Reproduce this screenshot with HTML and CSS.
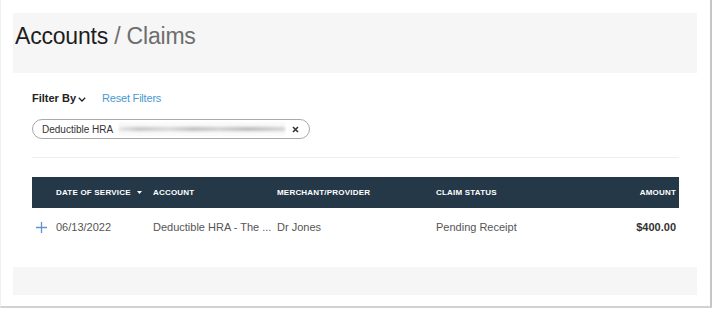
FILE: index.html
```html
<!DOCTYPE html>
<html lang="en">
<head>
    <meta charset="UTF-8">
    <meta name="viewport" content="width=device-width, initial-scale=1.0">
    <title>Accounts / Claims</title>
    <link rel="stylesheet" href="styles.css">
</head>
<body>

<div class="frame">
    <div class="title-band">
        <h1 class="page-title">Accounts <span class="crumb">/ Claims</span></h1>
    </div>

    <div class="content">
        <div class="filter-bar">
            <span class="filter-by">Filter By
                <svg class="chevron" width="8" height="5" viewBox="0 0 8 5"><path d="M0.8 0.8 L4 4 L7.2 0.8" fill="none" stroke="#222" stroke-width="1.3"/></svg>
            </span>
            <a class="reset-link" href="#">Reset Filters</a>
        </div>

        <div class="chip">
            <span class="chip-label">Deductible HRA</span>
            <span class="chip-blur"><span class="blur-line"></span></span>
            <svg class="chip-close" width="7" height="7" viewBox="0 0 7 7"><path d="M1 1 L6 6 M6 1 L1 6" stroke="#333" stroke-width="1.6"/></svg>
        </div>

        <div class="divider"></div>

        <div class="claims-table">
            <div class="table-head">
                <div class="cell cell-date">Date of Service
                    <svg class="sort" width="5" height="3" viewBox="0 0 5 3"><path d="M0 0 H5 L2.5 3 Z" fill="#fff"/></svg>
                </div>
                <div class="cell">Account</div>
                <div class="cell">Merchant/Provider</div>
                <div class="cell">Claim Status</div>
                <div class="cell cell-amount">Amount</div>
            </div>
            <div class="table-row">
                <div class="cell cell-date">
                    <svg class="expand" width="11" height="11" viewBox="0 0 11 11"><path d="M5.5 0 V11 M0 5.5 H11" stroke="#5f95d3" stroke-width="1.3"/></svg>
                    06/13/2022
                </div>
                <div class="cell">Deductible HRA - The ...</div>
                <div class="cell">Dr Jones</div>
                <div class="cell">Pending Receipt</div>
                <div class="cell cell-amount amount">$400.00</div>
            </div>
        </div>
    </div>

    <div class="bottom-band"></div>
</div>

</body>
</html>
```

FILE: styles.css
```css
body {
    margin: 0;
    font-family: 'Liberation Sans', Arial, sans-serif;
    background-color: #ffffff;
}
.frame {
    width: 712px;
    height: 308px;
    box-sizing: border-box;
    padding: 13px 13px 0 12px;
    border-left: 1px solid #f0f0f0;
    border-right: 2px solid #c6c6c6;
    border-bottom: 2px solid #d2d2d2;
    overflow: hidden;
}
.title-band {
    height: 60px;
    box-sizing: border-box;
    padding: 10px 0 0 2px;
    background-color: #f6f6f6;
}
.page-title {
    margin: 0;
    font-size: 23px;
    font-weight: normal;
    line-height: 1.2;
    color: #1e1e1e;
    letter-spacing: -0.2px;
}
.crumb {
    color: #6e6e6e;
}
.content {
    margin: 0 18px 0 19px;
}
.filter-bar {
    display: flex;
    align-items: center;
    margin-top: 18px;
    height: 14px;
    font-size: 11px;
    line-height: 14px;
}
.filter-by {
    font-weight: bold;
    color: #222;
    display: flex;
    align-items: center;
}
.chevron {
    margin-left: 2px;
    margin-top: 2px;
}
.reset-link {
    margin-left: 16px;
    color: #4a99d0;
    text-decoration: none;
    letter-spacing: -0.2px;
}
.chip {
    display: flex;
    align-items: center;
    width: 278px;
    height: 20px;
    margin-top: 14px;
    box-sizing: border-box;
    padding: 0 10px 0 9px;
    border: 1px solid #a9a9a9;
    border-radius: 10px;
    font-size: 10px;
    color: #333;
}
.chip-label {
    white-space: nowrap;
}
.chip-blur {
    flex: 1;
    height: 14px;
    margin: 0 7px 0 6px;
    display: flex;
    align-items: center;
    background-color: #fafafa;
}
.blur-line {
    display: block;
    width: 100%;
    height: 4px;
    background: linear-gradient(90deg, #e4e4e4 0%, #c4c4c4 12%, #d8d8d8 30%, #bcbcbc 45%, #cfcfcf 60%, #b8b8b8 78%, #d4d4d4 100%);
    filter: blur(1.5px);
}
.chip-close {
    flex: none;
}
.divider {
    height: 1px;
    margin-top: 18px;
    background-color: #eeeeee;
}
.claims-table {
    margin-top: 19px;
}
.table-head,
.table-row {
    display: grid;
    grid-template-columns: 121px 124px 159px 1fr auto;
    align-items: center;
}
.table-head {
    height: 31px;
    background-color: #253848;
    color: #ffffff;
    font-size: 8px;
    font-weight: bold;
    text-transform: uppercase;
    letter-spacing: 0.2px;
}
.table-head .cell-date {
    padding-left: 24px;
}
.table-row {
    height: 38px;
    font-size: 11px;
    color: #555555;
}
.table-row .cell-date {
    display: flex;
    align-items: center;
    padding-left: 4px;
}
.cell {
    white-space: nowrap;
}
.sort {
    margin-left: 4px;
    vertical-align: middle;
}
.expand {
    margin-right: 9px;
}
.cell-amount {
    text-align: right;
    padding-right: 3px;
}
.amount {
    font-weight: bold;
    color: #333333;
}
.bottom-band {
    height: 28px;
    margin-top: 21px;
    background-color: #f6f6f6;
}
```
